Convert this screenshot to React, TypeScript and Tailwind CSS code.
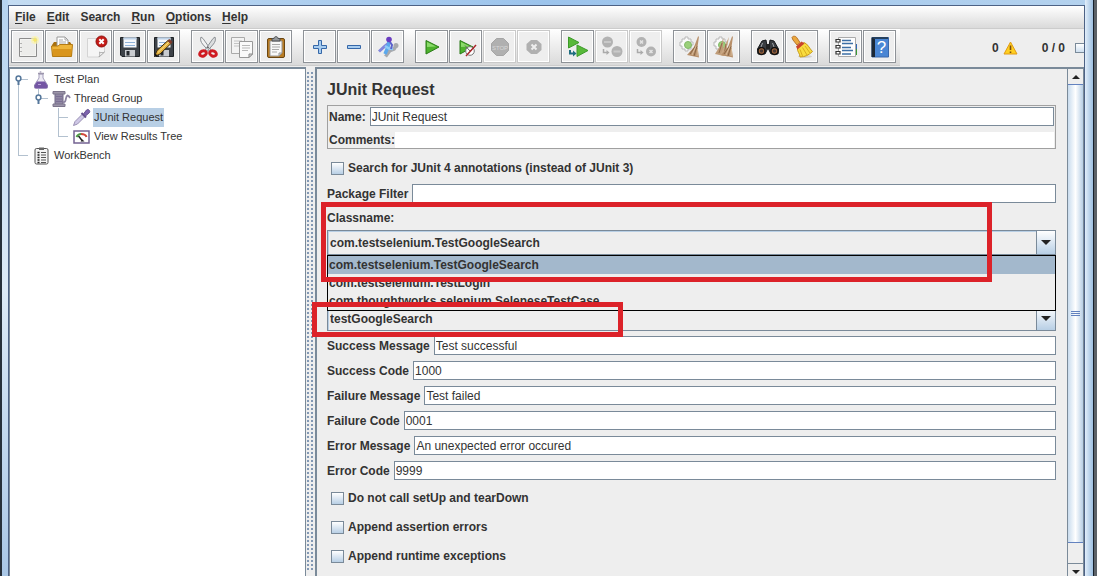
import { useState } from "react";
import type { ReactNode } from "react";

const menus = [
  { key: "F", rest: "ile" },
  { key: "E", rest: "dit" },
  { key: "", rest: "Search" },
  { key: "R", rest: "un" },
  { key: "O", rest: "ptions" },
  { key: "H", rest: "elp" },
];

const classNames = [
  "com.testselenium.TestGoogleSearch",
  "com.testselenium.TestLogin",
  "com.thoughtworks.selenium.SeleneseTestCase",
];

const messageFields = [
  { id: "success-message", label: "Success Message", value: "Test successful" },
  { id: "success-code", label: "Success Code", value: "1000" },
  { id: "failure-message", label: "Failure Message", value: "Test failed" },
  { id: "failure-code", label: "Failure Code", value: "0001" },
  { id: "error-message", label: "Error Message", value: "An unexpected error occured" },
  { id: "error-code", label: "Error Code", value: "9999" },
];

type Tool = { label: string; icon: ReactNode; disabled?: boolean };

const toolGroups: Tool[][] = [
  [
    { label: "New", icon: <NewIcon /> },
    { label: "Open", icon: <OpenIcon /> },
    { label: "Close", icon: <CloseFileIcon /> },
    { label: "Save", icon: <SaveIcon /> },
    { label: "Save As", icon: <SaveIcon pencil /> },
  ],
  [
    { label: "Cut", icon: <CutIcon /> },
    { label: "Copy", icon: <CopyIcon /> },
    { label: "Paste", icon: <PasteIcon /> },
  ],
  [
    { label: "Expand All", icon: <PlusIcon /> },
    { label: "Collapse All", icon: <MinusIcon /> },
    { label: "Toggle", icon: <ToggleIcon /> },
  ],
  [
    { label: "Start", icon: <StartIcon /> },
    { label: "Start no pauses", icon: <StartNoPausesIcon /> },
    { label: "Stop", icon: <StopIcon />, disabled: true },
    { label: "Shutdown", icon: <ShutdownIcon />, disabled: true },
  ],
  [
    { label: "Remote Start All", icon: <RemoteStartIcon /> },
    { label: "Remote Stop All", icon: <RemoteOffIcon />, disabled: true },
    { label: "Remote Shutdown All", icon: <RemoteOffIcon cross />, disabled: true },
  ],
  [
    { label: "Clear", icon: <ClearIcon /> },
    { label: "Clear All", icon: <ClearIcon all /> },
  ],
  [
    { label: "Search", icon: <BinocularsIcon /> },
    { label: "Reset Search", icon: <BroomIcon /> },
  ],
  [
    { label: "Function Helper", icon: <NotebookIcon /> },
    { label: "Help", icon: <HelpBookIcon /> },
  ],
];

export default function App() {
  const [selectedClass, setSelectedClass] = useState(classNames[0]);

  return (
    <div className="flex h-screen overflow-hidden bg-[#bcd6ef] font-['Liberation_Sans',Arial,sans-serif] text-xs text-[#333]">
      <div className="w-2 shrink-0 border-l-2 border-[#26303a] bg-linear-to-b from-[#b5d3f0] via-[#dceaf6] to-[#a9c7e6]" />

      <div className="flex min-w-0 flex-1 flex-col">
        <div className="h-[5px] shrink-0 bg-linear-to-r from-[#c4dcf2] via-[#9cc4ec] to-[#b4d2ee]" />

        <div className="flex min-h-0 flex-1 flex-col border-x border-t border-[#4d6285] bg-[#eee]">
          <MenuBar />
          <Toolbar />

          <div className="flex min-h-0 flex-1">
            <aside className="w-[297px] shrink-0 border-t-2 border-r border-l border-[#7a8a99] bg-white">
              <TestTree />
            </aside>

            <div className="my-1 w-[9px] shrink-0 bg-[radial-gradient(#8298b4_1px,transparent_1px)] bg-[size:4px_4px]" />

            <main className="flex min-w-0 flex-1 border-t-2 border-l-2 border-[#7a8a99]">
              <form className="min-w-0 flex-1 pt-2.5 pr-[11px] pl-2.5 font-bold">
                <h1 className="text-base leading-[22px]">JUnit Request</h1>

                <div className="mt-1 flex flex-col gap-1.5 border border-[#a0a0a0] pt-px pr-px pl-px">
                  <div className="flex h-[19px] items-center gap-1">
                    <label htmlFor="name">Name:</label>
                    <TextField id="name" value="JUnit Request" />
                  </div>
                  <div className="flex h-4 items-center">
                    <label htmlFor="comments">Comments:</label>
                    <input id="comments" className="h-4 min-w-0 flex-1 bg-white px-0.5 font-normal outline-none" />
                  </div>
                </div>

                <div className="mt-[9px]">
                  <CheckRow id="junit4" label="Search for JUnit 4 annotations (instead of JUnit 3)" />
                </div>

                <div className="mt-1.5 flex h-[19px] items-center gap-1">
                  <label htmlFor="package-filter">Package Filter</label>
                  <TextField id="package-filter" value="" />
                </div>

                <div className="relative mt-1.5">
                  <label htmlFor="classname" className="block leading-[18px]">
                    Classname:
                  </label>
                  <div className="mt-[3px]">
                    <ComboBox id="classname" value={selectedClass} options={classNames} onChange={setSelectedClass} />
                  </div>

                  <ul
                    role="listbox"
                    aria-label="Classname options"
                    className="absolute top-full right-0 left-0 z-10 border border-black bg-[#eee]"
                  >
                    {classNames.map((name) => (
                      <li
                        key={name}
                        role="option"
                        aria-selected={name === selectedClass}
                        onClick={() => setSelectedClass(name)}
                        className={`truncate px-px leading-[18px] ${name === selectedClass ? "bg-[#a3b8cc]" : ""}`}
                      >
                        {name}
                      </li>
                    ))}
                  </ul>

                  <div className="pointer-events-none absolute -top-[7px] right-16 -left-1.5 z-20 h-20 border-5 border-[#dc2229]" />
                </div>

                <div className="relative mt-[51px]">
                  <ComboBox id="method" label="Test Method" value="testGoogleSearch" options={["testGoogleSearch"]} />
                  <div className="pointer-events-none absolute -top-1 -left-[15px] z-20 h-[35px] w-[311px] border-5 border-[#dc2229]" />
                </div>

                <div className="mt-[5px] flex flex-col gap-1.5">
                  {messageFields.map((f) => (
                    <div key={f.id} className="flex h-[19px] items-center gap-1">
                      <label htmlFor={f.id}>{f.label}</label>
                      <TextField id={f.id} value={f.value} />
                    </div>
                  ))}
                </div>

                <div className="mt-2 flex flex-col gap-[9px]">
                  <CheckRow id="no-setup" label="Do not call setUp and tearDown" />
                  <CheckRow id="assertion-errors" label="Append assertion errors" />
                  <CheckRow id="runtime-exceptions" label="Append runtime exceptions" />
                </div>
              </form>

              <ScrollBar />
            </main>
          </div>
        </div>
      </div>

      <div className="w-2 shrink-0 bg-linear-to-r from-[#e2eefa] to-[#9dbfe0]" />
      <div className="w-1 shrink-0 border-l border-[#17202b] bg-[#5b6167]" />
    </div>
  );
}

function MenuBar() {
  return (
    <nav className="flex h-[23px] shrink-0 items-center gap-[11px] border-b border-[#ccc] bg-linear-to-b from-white to-[#dadada] px-1.5 font-bold">
      {menus.map((m) => (
        <button key={m.key + m.rest} type="button">
          {m.key && <span className="underline underline-offset-2">{m.key}</span>}
          {m.rest}
        </button>
      ))}
    </nav>
  );
}

function Toolbar() {
  return (
    <div className="flex h-[38px] shrink-0 items-start">
      <div className="flex h-[37px] gap-[11px] border-b border-[#ccc] bg-linear-to-b from-white to-[#dadada] pt-px pr-1 pl-0.5">
        {toolGroups.map((group, i) => (
          <div key={i} className="flex gap-px">
            {group.map((tool) => (
              <button
                key={tool.label}
                type="button"
                aria-label={tool.label}
                disabled={tool.disabled}
                className="flex size-[33px] items-center justify-center border border-[#8e9297] bg-[#eee] shadow-[inset_0_0_0_1px_#fff] disabled:border-[#c9c9c9]"
              >
                {tool.icon}
              </button>
            ))}
          </div>
        ))}
      </div>

      <div className="flex h-[38px] flex-1 items-center justify-end font-bold">
        <span>0</span>
        <span className="ml-1 mr-6">
          <WarningIcon />
        </span>
        <span>0 / 0</span>
        <span className="ml-2.5 h-2.5 w-[9px] border border-r-0 border-[#7a8a99] bg-linear-to-b from-white to-[#cfe0f0]" />
      </div>
    </div>
  );
}

type Guide = "line" | "blank" | "tee" | "elbow" | "root" | "handle";

function TestTree() {
  return (
    <ul className="pt-px pl-px text-[11px]">
      <TreeRow guides={["root"]} icon={<FlaskIcon />} label="Test Plan" />
      <TreeRow guides={["line", "handle"]} icon={<SpoolIcon />} label="Thread Group" />
      <TreeRow guides={["line", "blank", "tee"]} icon={<DropperIcon />} label="JUnit Request" selected />
      <TreeRow guides={["line", "blank", "elbow"]} icon={<GaugeIcon />} label="View Results Tree" />
      <TreeRow guides={["elbow"]} icon={<ClipboardListIcon />} label="WorkBench" />
    </ul>
  );
}

function TreeRow({
  guides,
  icon,
  label,
  selected,
}: {
  guides: Guide[];
  icon: ReactNode;
  label: string;
  selected?: boolean;
}) {
  return (
    <li className="flex h-[19px] items-center">
      {guides.map((g, i) => (
        <TreeGuide key={i} kind={g} />
      ))}
      <span className="flex w-5 justify-center">{icon}</span>
      <span className={`ml-0.5 px-px leading-[19px] ${selected ? "bg-[#b8cfe5]" : ""}`}>{label}</span>
    </li>
  );
}

function TreeGuide({ kind }: { kind: Guide }) {
  return (
    <svg width="20" height="19" viewBox="0 0 20 19" fill="none" stroke="#b3c1cf" className="shrink-0">
      {(kind === "line" || kind === "tee") && <path d="M7.5 0V19" />}
      {kind === "elbow" && <path d="M7.5 0V9.5" />}
      {kind === "root" && <path d="M7.5 9V19" />}
      {kind === "handle" && <path d="M7.5 0V8" />}
      {(kind === "tee" || kind === "elbow") && <path d="M7 9.5H17" />}
      {(kind === "root" || kind === "handle") && (
        <>
          <path d="M10 9.5H17" />
          <path d="M7.5 11V15" stroke="#55779b" strokeWidth="2" />
          <circle cx="7.5" cy="8.5" r="2.4" fill="#fff" stroke="#55779b" strokeWidth="1.5" />
        </>
      )}
    </svg>
  );
}

function TextField({ id, value }: { id: string; value: string }) {
  return (
    <input
      id={id}
      defaultValue={value}
      className="h-[19px] min-w-0 flex-1 border border-[#7a8a99] bg-white px-px font-normal outline-none"
    />
  );
}

function CheckRow({ id, label }: { id: string; label: string }) {
  return (
    <div className="flex h-5 items-center gap-1 pl-1">
      <input
        id={id}
        type="checkbox"
        className="size-[13px] appearance-none border border-[#7a8a99] bg-linear-to-b from-white to-[#b8cfe5] checked:bg-[#7a8a99]"
      />
      <label htmlFor={id}>{label}</label>
    </div>
  );
}

function ComboBox({
  id,
  label,
  value,
  options,
  onChange,
}: {
  id: string;
  label?: string;
  value: string;
  options: string[];
  onChange?: (value: string) => void;
}) {
  return (
    <div className="flex h-[25px] border border-[#7a8a99] bg-[#eee] shadow-[inset_1px_1px_0_#b8cfe5]">
      <select
        id={id}
        aria-label={label}
        value={value}
        onChange={(e) => onChange?.(e.target.value)}
        className="min-w-0 flex-1 appearance-none bg-transparent px-0.5 font-bold outline-none"
      >
        {options.map((o) => (
          <option key={o}>{o}</option>
        ))}
      </select>
      <span className="pointer-events-none flex w-[19px] items-center justify-center border-l border-[#7a8a99] bg-linear-to-b from-white to-[#b8cfe5]">
        <svg width="10" height="5" viewBox="0 0 10 5">
          <path d="M0 0H10L5 5Z" fill="#222" />
        </svg>
      </span>
    </div>
  );
}

function ScrollBar() {
  return (
    <div className="flex w-[17px] shrink-0 flex-col border-x border-[#7a8a99]">
      <button type="button" aria-label="Scroll up" className="flex h-[15px] items-center justify-center">
        <svg width="8" height="4" viewBox="0 0 8 4">
          <path d="M4 0L8 4H0Z" fill="#222" />
        </svg>
      </button>
      <div className="flex flex-1 flex-col items-center justify-center gap-px border-y border-[#6382bf] bg-linear-to-r from-[#c9dcee] via-white to-[#b8cfe5]">
        <span className="h-px w-[9px] bg-[#6382bf]" />
        <span className="h-px w-[9px] bg-[#6382bf]" />
        <span className="h-px w-[9px] bg-[#6382bf]" />
      </div>
      <div className="h-5" />
      <button
        type="button"
        aria-label="Scroll down"
        className="flex h-[13px] items-end justify-center border-t border-[#7a8a99] pb-0.5"
      >
        <svg width="8" height="4" viewBox="0 0 8 4">
          <path d="M0 0H8L4 4Z" fill="#222" />
        </svg>
      </button>
    </div>
  );
}

function Icon({ children }: { children: ReactNode }) {
  return (
    <svg width="24" height="24" viewBox="0 0 24 24" fill="none" aria-hidden="true">
      {children}
    </svg>
  );
}

function NewIcon() {
  return (
    <Icon>
      <path d="M3.5 3.5H20.5V21.5H3.5Z" fill="#f4f4f2" stroke="#8c8c8c" />
      <path d="M5 5H19V20H5Z" fill="#ececea" />
      <path d="M5 8V9M5 12V13M5 16V17" stroke="#777" />
      <circle cx="19" cy="5" r="4" fill="#fbf4b0" opacity=".75" />
      <path d="M19 2L20 4L22 5L20 6L19 8L18 6L16 5L18 4Z" fill="#f5e66c" />
    </Icon>
  );
}

function OpenIcon() {
  return (
    <Icon>
      <path d="M2 10L4 7H20L22 10V20H2Z" fill="#a8700f" />
      <path d="M7 2H15L18 5V13H7Z" fill="#fff" stroke="#999" />
      <path d="M15 2V5H18M9 5H13M9 7H16M9 9H16" stroke="#aaa" />
      <path d="M1.5 11H8L10 9.5H22.5L21.5 21.5H2.5Z" fill="#eeb43a" stroke="#b47a13" />
      <path d="M3 14H21.5L21 21H3Z" fill="#d9951c" />
    </Icon>
  );
}

function CloseFileIcon() {
  return (
    <Icon>
      <path d="M3.5 3.500H20.5V17L15 22H3.5Z" fill="#f5f5f5" stroke="#d4d4d4" />
      <path d="M15 22C16 20 16 18 15.5 17C17 18 19 18 20.5 17Z" fill="#fff" stroke="#aaa" />
      <circle cx="17.5" cy="6.500" r="5.5" fill="#c41a16" stroke="#8f110e" />
      <path d="M15.3 4.300L19.7 8.700M19.7 4.300L15.3 8.700" stroke="#fff" strokeWidth="2" />
    </Icon>
  );
}

function SaveIcon({ pencil }: { pencil?: boolean }) {
  return (
    <Icon>
      <path d="M2.5 2.500H21.5V21.5H4L2.5 20Z" fill="#3d4248" stroke="#1e2226" />
      <path d="M5.5 2.500H18.5V12.5H5.5Z" fill="#f5f8fc" />
      <path d="M5.5 2.500H18.5V4.500H5.5Z" fill="#bcd0e6" />
      <path d="M7 7.500H17M7 10.5H17" stroke="#8fb2d8" />
      <path d="M7 15H17V21.5H7Z" fill="#c9ccd0" />
      <path d="M8.5 16H11.5V20.5H8.5Z" fill="#24282d" />
      {pencil && (
        <>
          <path d="M2.5 21.5L5 15.5L16.5 5L19.5 8L8 19Z" fill="#e4b13d" stroke="#3b290c" />
          <path d="M6 17.5L17.5 6.500" stroke="#fbe28f" />
          <path d="M15.5 6L17.5 4L20.5 7L18.5 9Z" fill="#7e3a2c" />
          <path d="M2 22L3.5 18.5L5.5 20.5Z" fill="#111" />
        </>
      )}
    </Icon>
  );
}

function CutIcon() {
  return (
    <Icon>
      <path d="M5 2C4 5 5 7 6.5 9L13 16.5L15 15L7 3.500Z" fill="#f3f3f3" stroke="#8b8f94" />
      <path d="M19 2C20 5 19 7 17.5 9L11 16.5L9 15L17 3.500Z" fill="#dcdee0" stroke="#8b8f94" />
      <circle cx="12" cy="12.5" r="1" fill="#666" />
      <ellipse cx="7" cy="18.5" rx="3.5" ry="2.500" stroke="#cf1b22" strokeWidth="3" transform="rotate(-25 7 18.5)" />
      <ellipse cx="17" cy="18.5" rx="3.5" ry="2.500" stroke="#cf1b22" strokeWidth="3" transform="rotate(25 17 18.5)" />
    </Icon>
  );
}

function CopyIcon() {
  return (
    <Icon>
      <path d="M1.5 2.500H14.5V18.5H1.5Z" fill="#f3f3f3" stroke="#aaa" />
      <path d="M4 6H12M4 8.500H12M4 11H12" stroke="#c4c4c4" />
      <path d="M9.5 6.500H22.5V19L19 22.5H9.5Z" fill="#fafafa" stroke="#999" />
      <path d="M12 10.5H20M12 13H20M12 15.5H18" stroke="#b8b8b8" />
      <path d="M19 22.5V19H22.5Z" fill="#ddd" stroke="#888" />
    </Icon>
  );
}

function PasteIcon() {
  return (
    <Icon>
      <rect x="3.5" y="3.5" width="17" height="19" rx="1.5" fill="#b87c25" stroke="#6b4611" />
      <path d="M6 6H18V18L15 21H6Z" fill="#f8f8f8" stroke="#999" />
      <path d="M8 9.500H16M8 12H16M8 14.5H15M8 17H13" stroke="#aaa" />
      <path d="M15 21V18H18Z" fill="#ddd" stroke="#999" />
      <path d="M8 6V3.500H10C10 1 14 1 14 3.500H16V6Z" fill="#94989c" stroke="#4c4f52" />
    </Icon>
  );
}

function PlusIcon() {
  return (
    <Icon>
      <path d="M10.5 5.500H13.5V10.5H18.5V13.5H13.5V18.5H10.5V13.5H5.5V10.5H10.5Z" fill="#a8cdf0" stroke="#3567a8" />
    </Icon>
  );
}

function MinusIcon() {
  return (
    <Icon>
      <path d="M5.5 10.5H18.5V13.5H5.5Z" fill="#a8cdf0" stroke="#3567a8" />
    </Icon>
  );
}

function ToggleIcon() {
  return (
    <Icon>
      <path d="M9.5 21.5L14 15.5L18 14L20 11" stroke="#a7a9ad" strokeWidth="3.500" />
      <circle cx="20" cy="10.5" r="2.5" fill="#a7a9ad" />
      <path d="M3 16.5L8 12L13 8" stroke="#8286dc" strokeWidth="3" />
      <path d="M13 6L12 12L9 19" stroke="#5ba8ec" strokeWidth="3.500" />
      <path d="M9 11L13 13.5L17 14" stroke="#8dcdf8" strokeWidth="2.500" />
      <path d="M14 7L16 10L15 14" stroke="#5a62cc" strokeWidth="2" />
      <circle cx="13" cy="4.500" r="2.800" fill="#6a3cc0" />
    </Icon>
  );
}

function StartIcon() {
  return (
    <Icon>
      <path d="M6 5.500L19 12L6 19Z" fill="#4db22d" stroke="#2a7b17" strokeLinejoin="round" />
      <path d="M7 7L16 11.5L7 12Z" fill="#8bdb6b" />
    </Icon>
  );
}

function StartNoPausesIcon() {
  return (
    <Icon>
      <path d="M6 5.500L19 12L6 19Z" fill="#4db22d" stroke="#2a7b17" strokeLinejoin="round" />
      <path d="M7 7L16 11.5L7 12Z" fill="#8bdb6b" />
      <circle cx="16" cy="16" r="4.300" fill="#fff" stroke="#777" />
      <path d="M11 10.5L16 16L18 14" stroke="#666" />
      <path d="M12 21L22 10" stroke="#a8262a" strokeWidth="1.500" />
    </Icon>
  );
}

function StopIcon() {
  return (
    <Icon>
      <path d="M8.5 3.500H15.5L20.5 8.500V15.5L15.5 20.5H8.5L3.5 15.5V8.500Z" fill="#b0b0b0" stroke="#a5a5a5" />
      <text x="12" y="14.5" textAnchor="middle" fontSize="6" fill="#d8d8d8">
        STOP
      </text>
    </Icon>
  );
}

function ShutdownIcon() {
  return (
    <Icon>
      <path d="M9 5H15L19.5 9V15L15 19H9L4.5 15V9Z" fill="#b0b0b0" />
      <path d="M9.5 9.500L14.5 14.5M14.5 9.500L9.5 14.5" stroke="#eee" strokeWidth="2" />
    </Icon>
  );
}

function RemoteStartIcon() {
  return (
    <Icon>
      <path d="M2.5 2L13 7.500L2.5 13Z" fill="#58b93a" stroke="#3c9a2a" />
      <path d="M11 10L22 15.5L11 21.5Z" fill="#58b93a" stroke="#3c9a2a" />
      <path d="M4 15V18.5H8" stroke="#1f6d80" strokeWidth="2" />
      <path d="M7 15.5L10.5 18.5L7 21.5Z" fill="#1f6d80" />
    </Icon>
  );
}

function RemoteOffIcon({ cross }: { cross?: boolean }) {
  return (
    <Icon>
      <circle cx="7.5" cy="7" r={cross ? 5 : 5.5} fill="#b2b2b2" />
      <circle cx="17" cy="16.5" r={cross ? 5 : 5.5} fill="#b2b2b2" />
      {cross ? (
        <path d="M6 5.500L9 8.500M9 5.500L6 8.500M15.5 15L18.5 18M18.5 15L15.5 18" stroke="#e4e4e4" strokeWidth="1.500" />
      ) : (
        <path d="M4 7H11M13.5 16.5H20.5" stroke="#c9c9c9" strokeWidth="2" />
      )}
      <path d="M3.5 14V17.5H7" stroke="#aaa" strokeWidth="1.500" />
      <path d="M6.5 15L9.5 17.5L6.5 20Z" fill="#aaa" />
    </Icon>
  );
}

function ClearIcon({ all }: { all?: boolean }) {
  return (
    <Icon>
      <path d="M4 4H7V2H10V4H13V7H15V10H13V14H10V16H7V14H4V11H2V7H4Z" fill="#fafafa" stroke="#b8b8b8" />
      <circle cx="10" cy="10" r="3.5" fill="#9bd07a" stroke="#82b968" />
      {all && <path d="M11.5 3L11 12L12 21L3 19L8 11Z" fill="#bf9c78" />}
      {all && <path d="M17 2L15 12L16 21.5L8 20L12 12Z" fill="#c9a682" />}
      {all && <path d="M10 8L7 18M14 9L12 20" stroke="#8f6d4b" />}
      <path d="M21 1.500L19.5 12L21 22.5L9 20L16 12L20 1.500Z" fill="#b8906a" />
      <path d="M17.5 11L12 19M19 11L16 21" stroke="#8a6644" />
      <path d="M18 11L14 20M19.5 14L19 21" stroke="#d9bd9c" />
    </Icon>
  );
}

function BinocularsIcon() {
  return (
    <Icon>
      <path d="M6 6L10 5L11.5 14L9 19H2L1.5 14Z" fill="#3a3d41" stroke="#17191b" />
      <path d="M18 6L14 5L12.5 14L15 19H22L22.5 14Z" fill="#3a3d41" stroke="#17191b" />
      <path d="M10 9H14V14H10Z" fill="#222" />
      <circle cx="5.5" cy="16" r="3.500" fill="#a4683e" stroke="#111" strokeWidth="1.500" />
      <circle cx="18.5" cy="16" r="3.500" fill="#a4683e" stroke="#111" strokeWidth="1.500" />
      <circle cx="5.5" cy="16" r="1.800" fill="#4a3a34" />
      <circle cx="18.5" cy="16" r="1.800" fill="#4a3a34" />
      <path d="M6.5 8L5 12M16.5 8L18 12" stroke="#a0a4a8" />
    </Icon>
  );
}

function BroomIcon() {
  return (
    <Icon>
      <ellipse cx="15" cy="21.5" rx="7" ry="1.500" fill="#d0d0d0" />
      <path d="M2 2.500C3 0.500 6 1 7 3L10 7.500L7 10L3 5Z" fill="#eba83f" stroke="#b9762a" />
      <path d="M7.5 13L14 7.500C18 9 19 13 22.5 16.5C19 20 15 22 10 22C10 18 7 17 7.5 13Z" fill="#f8dc3e" stroke="#c79a18" />
      <path d="M6 11.5L11.5 6.500L14.5 8.500L7.5 14.5Z" fill="#c9442a" />
      <path d="M10 14.5L12.5 21M12.5 12.5L17 20M15 11L20 18" stroke="#d8ab1e" />
    </Icon>
  );
}

function NotebookIcon() {
  return (
    <Icon>
      <path d="M20 9H23V14H20Z" fill="#2f67b5" />
      <path d="M20 14H23V20H20Z" fill="#3b9a35" />
      <path d="M4.5 2.500H21.5V21.5H4.5Z" fill="#fdfdfd" stroke="#aaa" />
      <path d="M8 5.500H17M8 8.500H19M8 12.5H17M8 15.5H19M8 19H17" stroke="#3c6fa5" strokeWidth="1.300" />
      <path d="M2 4.500H6V7H2ZM2 10.500H6V13H2ZM2 16.500H6V19H2Z" fill="#fff" stroke="#333" strokeWidth="1.200" />
    </Icon>
  );
}

function HelpBookIcon() {
  return (
    <Icon>
      <path d="M4 2.500H20.5V22H4Z" fill="#4a86d4" stroke="#3a68ac" />
      <path d="M3.5 2.500H7V22H3.5Z" fill="#1c2836" />
      <path d="M4 2H20V4H6Z" fill="#24405f" />
      <text x="13.5" y="18" textAnchor="middle" fontSize="17" fill="#fff">
        ?
      </text>
    </Icon>
  );
}

function WarningIcon() {
  return (
    <svg width="15" height="14" viewBox="0 0 15 14" aria-hidden="true">
      <path d="M7.5 1L14 13H1Z" fill="#ffcf1f" stroke="#e09a15" strokeLinejoin="round" />
      <path d="M7.5 4.500V9M7.5 10.5V12" stroke="#7a4a10" strokeWidth="1.600" />
    </svg>
  );
}

function FlaskIcon() {
  return (
    <svg width="16" height="18" viewBox="0 0 16 18" fill="none" aria-hidden="true">
      <path d="M6 3H10V7L14.5 14V17H1.5V14L6 7Z" fill="#eceaf3" stroke="#a39dba" />
      <path d="M4 10.500H12L14.500 14.500V16L13.500 17.500H2.500L1.500 16V14.500Z" fill="#7456a4" />
      <path d="M5 2.500H11" stroke="#9c96ac" strokeWidth="1.500" />
      <circle cx="7.5" cy="1" r="1" fill="#b9b3c6" />
      <path d="M5 13.5H8" stroke="#b9a5da" />
    </svg>
  );
}

function SpoolIcon() {
  return (
    <svg width="19" height="18" viewBox="0 0 19 18" fill="none" aria-hidden="true">
      <path d="M3 3H11V15H3Z" fill="#9188a4" stroke="#6f6785" />
      <path d="M1 1.500H13V4H1ZM1 14H13V16.500H1Z" fill="#9c95aa" stroke="#7b748a" />
      <path d="M4 6.500H10M4 9H10M4 11.5H10" stroke="#7a6f93" />
      <path d="M11 12C15 13 13 6 15.500 5.500C17 5.500 17.500 7 18 8" stroke="#8d84a2" strokeWidth="1.800" />
    </svg>
  );
}

function DropperIcon() {
  return (
    <svg width="19" height="19" viewBox="0 0 19 19" fill="none" aria-hidden="true">
      <path d="M1.5 17.5L3 13.5L10.5 6L13 8.500L5.5 16Z" fill="#cfc8e6" stroke="#9a90b4" />
      <path d="M9.5 5L14 9.500" stroke="#66518f" strokeWidth="2" />
      <path d="M11.5 6L14.5 2C16 0.500 18.5 2.500 17.5 4.500L13.5 8Z" fill="#7d63ae" stroke="#66518f" />
    </svg>
  );
}

function GaugeIcon() {
  return (
    <svg width="17" height="14" viewBox="0 0 17 14" fill="none" aria-hidden="true">
      <path d="M1 1H16V13H1Z" fill="#fff" stroke="#746392" strokeWidth="1.500" />
      <path d="M3.5 7C4.500 5 6 4 8 4" stroke="#4f9c45" strokeWidth="2" />
      <path d="M8 4C11 4 13 5.500 13.5 7" stroke="#d0473a" strokeWidth="2" />
      <path d="M9.5 11L5.5 6" stroke="#222" strokeWidth="1.500" />
      <path d="M7.5 11.5H11.5L9.5 9.500Z" fill="#222" />
    </svg>
  );
}

function ClipboardListIcon() {
  return (
    <svg width="15" height="18" viewBox="0 0 15 18" fill="none" aria-hidden="true">
      <rect x="1" y="1.500" width="13" height="15.5" rx="1.500" fill="#f5f5f5" stroke="#555" />
      <path d="M5 0.500H10V3H5Z" fill="#666" />
      <path d="M3.5 5.500H5.5M3.5 8H5.5M3.5 10.5H5.5M3.5 13H5.5M3.5 15.5H5.5" stroke="#222" strokeWidth="1.400" />
      <path d="M7 5.500H12M7 8H12M7 10.5H12M7 13H12M7 15.5H12" stroke="#555" strokeWidth="1.200" />
    </svg>
  );
}
